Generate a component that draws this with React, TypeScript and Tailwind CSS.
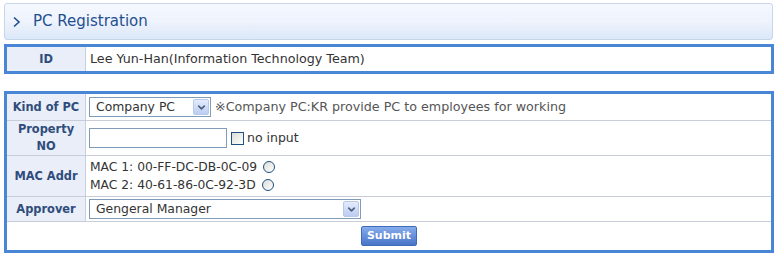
import { ChevronDown } from 'lucide-react';

const font = "font-['DejaVu_Sans',Verdana,sans-serif]";

const Label = ({ children, h }: { children: React.ReactNode; h: string }) => (
  <div
    className={`w-[79px] shrink-0 bg-[#e9eef8] border-r border-[#c8cfdc] flex items-center justify-center text-center text-[11.4px] leading-[17px] font-bold text-[#2f4c7c] ${h}`}
  >
    {children}
  </div>
);

const Select = ({ value, width }: { value: string; width: string }) => (
  <div className={`${width} h-[20px] border border-[#7f9db9] bg-white flex items-center justify-between pl-[6px] pr-[1px] text-[12.4px] text-[#333]`}>
    <span>{value}</span>
    <span className="w-[16px] h-[16px] rounded-[2px] border border-[#b8c8e8] bg-gradient-to-b from-[#e4ecfc] to-[#bccdf2] flex items-center justify-center">
      <ChevronDown size={11} strokeWidth={3.5} className="text-[#4d5e80]" />
    </span>
  </div>
);

const Radio = () => (
  <span className="inline-block ml-[2px] w-[12px] h-[12px] rounded-full border border-[#1c5180] bg-gradient-to-br from-[#dcdcd7] to-white align-[-2px]" />
);

export default function App() {
  return (
    <div className={`w-[778px] h-[258px] bg-white px-[4px] pt-[3px] ${font}`}>
      {/* title bar */}
      <div className="w-[769px] h-[37px] rounded-[3px] border border-[#c6d6ea] bg-gradient-to-b from-[#f5f8fe] via-[#eef3fd] to-[#dbe8f7] flex items-center pl-[7px]">
        <svg width="10" height="12" viewBox="0 0 10 12" className="mr-[11px]">
          <polyline points="2,1.5 7,6 2,10.5" fill="none" stroke="#1f4f8f" strokeWidth="1.6" />
        </svg>
        <span className="text-[15px] text-[#1f4f8f] mb-[1px]">PC Registration</span>
      </div>

      {/* ID */}
      <div className="mt-[4px] w-[770px] border-[3px] border-[#4a86d6] flex h-[30px]">
        <Label h="h-[24px]">ID</Label>
        <div className="flex items-center pl-[4px] text-[12.7px] text-[#333]">
          Lee Yun-Han(Information Technology Team)
        </div>
      </div>

      {/* form */}
      <div className="mt-[17px] w-[770px] border-[3px] border-[#4a86d6]">
        <div className="flex border-b border-[#c8cdd9]">
          <Label h="h-[26px]">Kind of PC</Label>
          <div className="flex items-center pl-[3px] text-[12.7px] text-[#555]">
            <Select value="Company PC" width="w-[122px]" />
            <span className="ml-[4px]">※Company PC:KR provide PC to employees for working</span>
          </div>
        </div>
        <div className="flex border-b border-[#c8cdd9]">
          <Label h="h-[34px]">
            Property
            <br />
            NO
          </Label>
          <div className="flex items-center pl-[3px] text-[12.5px] text-[#333]">
            <div className="w-[138px] h-[20px] border border-[#7f9db9] bg-white" />
            <span className="ml-[4px] w-[13px] h-[13px] border border-[#1c5180] bg-gradient-to-br from-[#dcdcd7] to-white" />
            <span className="ml-[3px]">no input</span>
          </div>
        </div>
        <div className="flex border-b border-[#c8cdd9]">
          <Label h="h-[40px]">MAC Addr</Label>
          <div className="flex flex-col justify-center pl-[4px] text-[12.3px] leading-[18px] text-[#333]">
            <div>
              MAC 1: 00-FF-DC-DB-0C-09 <Radio />
            </div>
            <div>
              MAC 2: 40-61-86-0C-92-3D <Radio />
            </div>
          </div>
        </div>
        <div className="flex border-b border-[#c8cdd9]">
          <Label h="h-[24px]">Approver</Label>
          <div className="flex items-center pl-[3px]">
            <Select value="Gengeral Manager" width="w-[272px]" />
          </div>
        </div>
        <div className="h-[28px] flex items-center justify-center">
          <button className="w-[56px] h-[20px] rounded-[2px] border border-[#3f6cb8] bg-gradient-to-b from-[#86acec] to-[#4875c6] text-white text-[11px] font-bold">
            Submit
          </button>
        </div>
      </div>
    </div>
  );
}
